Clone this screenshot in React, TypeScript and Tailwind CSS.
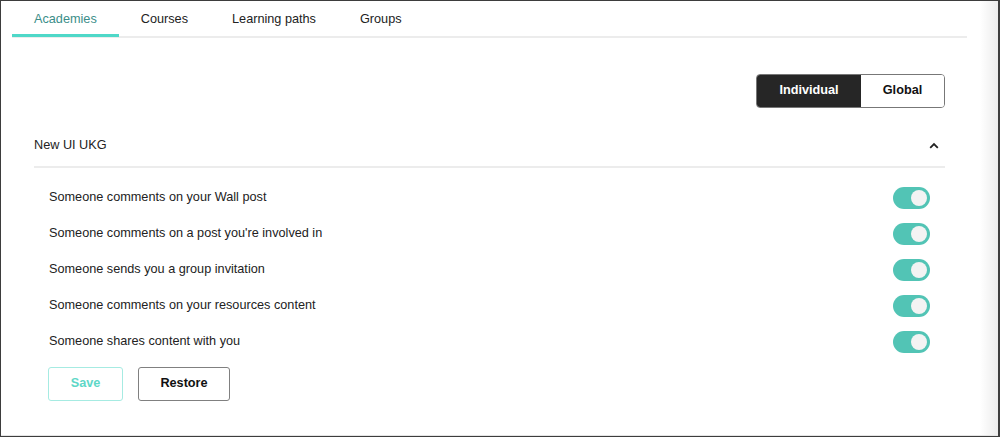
import { useState } from "react";

const tabs = ["Academies", "Courses", "Learning paths", "Groups"];

const rows = [
  "Someone comments on your Wall post",
  "Someone comments on a post you're involved in",
  "Someone sends you a group invitation",
  "Someone comments on your resources content",
  "Someone shares content with you",
];

function Toggle({ on, onClick }: { on: boolean; onClick: () => void }) {
  return (
    <button
      onClick={onClick}
      className={`flex h-[22px] w-[37px] items-center rounded-full px-[3px] ${
        on ? "justify-end bg-[#52c4b5]" : "justify-start bg-[#cfcfcf]"
      }`}
    >
      <span className="h-[16px] w-[16px] rounded-full bg-[#f3f3f3]" />
    </button>
  );
}

export default function App() {
  const [tab, setTab] = useState("Academies");
  const [mode, setMode] = useState("Individual");
  const [checks, setChecks] = useState(rows.map(() => true));

  return (
    <div
      className="flex h-[437px] w-[1000px] overflow-hidden border border-r-2 border-[#3d3d3d] bg-white text-[12.7px] text-[#222]"
      style={{ fontFamily: '"Liberation Sans", Arial, sans-serif' }}
    >
      <div className="flex flex-1 flex-col border-b border-[#e4e4e4] pl-[11px]">
        {/* tabs */}
        <div className="flex w-[955px] border-b-2 border-[#ececec]">
          {tabs.map((t) => (
            <button
              key={t}
              onClick={() => setTab(t)}
              className={`-mb-[1px] flex h-[36px] items-center border-b-[3px] px-[22px] pt-[4px] ${
                tab === t
                  ? "border-[#4fd8c8] text-[#3b8e89]"
                  : "border-transparent text-[#222]"
              }`}
            >
              {t}
            </button>
          ))}
        </div>

        <div className="w-[955px] px-[22px]">
          <div className="flex justify-end pt-[36px]">
            <div className="flex h-[34px] overflow-hidden rounded-[4px] border border-[#777]">
              <button
                onClick={() => setMode("Individual")}
                className={`w-[104px] font-bold ${
                  mode === "Individual" ? "bg-[#262626] text-white" : "bg-white text-[#111]"
                }`}
              >
                Individual
              </button>
              <button
                onClick={() => setMode("Global")}
                className={`w-[83px] font-bold ${
                  mode === "Global" ? "bg-[#262626] text-white" : "bg-white text-[#111]"
                }`}
              >
                Global
              </button>
            </div>
          </div>

          <div className="mt-[16px] flex h-[44px] items-center justify-between border-b-2 border-[#ececec] pt-[1px]">
            <span>New UI UKG</span>
            <svg width="10" height="7" viewBox="0 0 10 7" className="mr-[6px]">
              <path d="M1.2 5.8 5 2 8.8 5.8" fill="none" stroke="#222" strokeWidth="1.8" />
            </svg>
          </div>

          <div className="pt-[12px] pl-[15px] pr-[15px]">
            {rows.map((r, i) => (
              <div key={r} className="flex h-[36px] items-center justify-between">
                <span>{r}</span>
                <Toggle
                  on={checks[i]}
                  onClick={() => setChecks(checks.map((c, j) => (j === i ? !c : c)))}
                />
              </div>
            ))}
          </div>

          <div className="mt-[7px] flex gap-[15px] pl-[14px]">
            <button className="h-[34px] w-[75px] rounded-[3px] border border-[#a6ebe2] font-bold text-[#5ed7c7]">
              Save
            </button>
            <button className="h-[34px] w-[92px] rounded-[3px] border border-[#808080] font-bold text-[#111]">
              Restore
            </button>
          </div>
        </div>
      </div>
      <div className="w-[18px] border-b border-[#e4e4e4] bg-gradient-to-r from-white to-[#ececec]" />
    </div>
  );
}
